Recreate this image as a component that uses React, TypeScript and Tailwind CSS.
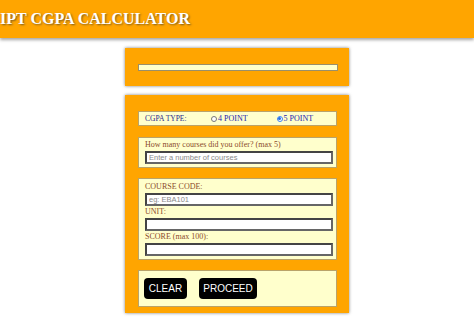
import React from 'react'

const serif = { fontFamily: '"Liberation Serif", "Times New Roman", serif' }

function Radio({ label, checked }: { label: string; checked?: boolean }) {
  return (
    <label className="flex items-center gap-[1px] text-[8px] text-[#2323b0]">
      <span
        className={
          checked
            ? 'flex h-[6px] w-[6px] items-center justify-center rounded-full border border-[#3b82f6] bg-white'
            : 'h-[6px] w-[6px] rounded-full border border-[#777] bg-white'
        }
      >
        {checked && <span className="h-[3px] w-[3px] rounded-full bg-[#1f6fe5]" />}
      </span>
      {label}
    </label>
  )
}

function Field({ placeholder }: { placeholder?: string }) {
  return (
    <input
      className="box-border block h-[13px] w-[188px] border-2 border-t-[#444] border-l-[#444] border-r-[#666] border-b-[#666] bg-white px-[2px] text-[7.5px] text-[#333] outline-none placeholder:text-[#8a8a8a]"
      style={{ fontFamily: '"Liberation Sans", Arial, sans-serif' }}
      placeholder={placeholder}
    />
  )
}

export default function App() {
  return (
    <div className="min-h-[335px] w-full overflow-hidden bg-white" style={serif}>
      <header className="flex h-[38px] items-center bg-[#ffa500] shadow-[0_2px_3px_rgba(0,0,0,0.35)]">
        <h1 className="text-[16px] font-bold text-white [text-shadow:1px_1px_2px_#7a5a20]">
          IPT CGPA CALCULATOR
        </h1>
      </header>

      <main className="flex flex-col items-center pt-[10px]">
        <section className="box-border h-[38px] w-[224px] bg-[#ffa500] px-[13px] pt-[16px] shadow-[0_0_3px_rgba(0,0,0,0.5)]">
          <div className="h-[7px] w-[200px] border border-[#9a8f6a] bg-[#ffffcc]" />
        </section>

        <section className="mt-[9px] box-border flex w-[224px] flex-col bg-[#ffa500] px-[13px] pb-[6px] pt-[16px] shadow-[0_0_3px_rgba(0,0,0,0.5)]">
          <div className="box-border flex h-[15px] w-[199px] items-center border border-[#b9a36a] bg-[#ffffcc] pl-[6px] text-[7.5px] text-[#26268c]">
            <span className="w-[66px]">CGPA TYPE:</span>
            <Radio label="4 POINT" />
            <span className="w-[29px]" />
            <Radio label="5 POINT" checked />
          </div>

          <div className="mt-[11px] box-border w-[199px] border border-[#b9a36a] bg-[#ffffcc] pb-[3px] pl-[6px]">
            <p className="flex h-[13px] items-center text-[8px] text-[#8b4a2b]">How many courses did you offer? (max 5)</p>
            <Field placeholder="Enter a number of courses" />
          </div>

          <div className="mt-[10px] box-border w-[199px] border border-[#b9a36a] bg-[#ffffcc] pb-[3px] pl-[6px] pt-[2px] text-[8px] text-[#8b4a2b]">
            <p className="flex h-[12px] items-center">COURSE CODE:</p>
            <Field placeholder="eg: EBA101" />
            <p className="flex h-[12px] items-center">UNIT:</p>
            <Field />
            <p className="flex h-[12px] items-center">SCORE (max 100):</p>
            <Field />
          </div>

          <div
            className="mt-[10px] box-border flex h-[37px] w-[199px] items-center gap-[12px] border border-[#b9a36a] bg-[#ffffcc] pl-[5px]"
            style={{ fontFamily: '"Liberation Sans", Arial, sans-serif' }}
          >
            <button className="h-[21px] w-[43px] rounded-[4px] bg-black text-[10px] text-white">CLEAR</button>
            <button className="h-[21px] w-[58px] rounded-[4px] bg-black text-[10px] text-white">PROCEED</button>
          </div>
        </section>
      </main>
    </div>
  )
}
